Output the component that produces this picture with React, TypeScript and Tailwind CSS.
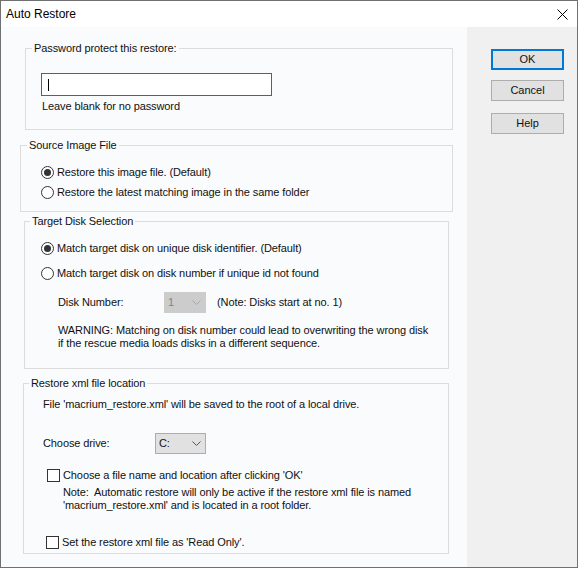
import React from "react";

const font = { fontFamily: '"Liberation Sans", Arial, sans-serif' };

function Radio({ checked }: { checked?: boolean }) {
  return (
    <span className="w-[13px] h-[13px] rounded-full border border-[#333333] bg-white flex items-center justify-center shrink-0">
      {checked && <span className="w-[7px] h-[7px] rounded-full bg-[#333333]" />}
    </span>
  );
}

function Check() {
  return <span className="w-[13px] h-[13px] border border-[#333333] bg-white shrink-0" />;
}

function Chevron({ color }: { color: string }) {
  return (
    <svg width="9" height="5" viewBox="0 0 9 5" className="shrink-0">
      <polyline points="0.5,0.5 4.5,4.5 8.5,0.5" fill="none" stroke={color} strokeWidth="1" />
    </svg>
  );
}

function GroupLabel({ children, left }: { children: React.ReactNode; left: string }) {
  return (
    <span className={`absolute -top-[8px] ${left} px-[2px] bg-[#fafbfd] h-[14px] leading-[14px] whitespace-nowrap`}>
      {children}
    </span>
  );
}

export default function App() {
  return (
    <div className="w-[578px] h-[569px] bg-white text-[11px] leading-[13px] text-[#111111]" style={font}>
      <div className="w-[578px] h-[568px] border border-[#707070] flex flex-col">
        {/* Title bar */}
        <div className="h-[26px] bg-white flex items-center justify-between pl-[5px] pr-[9px] shrink-0">
          <span className="text-[12px] leading-[14px] text-black">Auto Restore</span>
          <svg width="11" height="11" viewBox="0 0 11 11">
            <line x1="0.5" y1="0.5" x2="10.5" y2="10.5" stroke="#000" strokeWidth="1" />
            <line x1="10.5" y1="0.5" x2="0.5" y2="10.5" stroke="#000" strokeWidth="1" />
          </svg>
        </div>

        <div className="flex flex-1 tracking-[-0.1px]">
          {/* Left content */}
          <div className="w-[466px] bg-[#fafbfd] flex flex-col">
            {/* Group 1 */}
            <div className="relative mt-[21px] ml-[24px] w-[428px] h-[82px] border border-[#dcdcdc] pt-[24px] pl-[15px] flex flex-col">
              <GroupLabel left="left-[6px]">Password protect this restore:</GroupLabel>
              <div className="w-[231px] h-[23px] border border-[#0078d7] bg-white flex items-center pl-[6px]">
                <span className="w-[1px] h-[12px] bg-black" />
              </div>
              <span className="mt-[4px] ml-[1px]">Leave blank for no password</span>
            </div>

            {/* Group 2 */}
            <div className="relative mt-[15px] ml-[19px] w-[433px] h-[67px] border border-[#dcdcdc] pt-[16px] pl-[20px] flex flex-col">
              <GroupLabel left="left-[6px]">Source Image File</GroupLabel>
              <div className="h-[20px] flex items-center gap-[3px]">
                <Radio checked />
                <span>Restore this image file. (Default)</span>
              </div>
              <div className="h-[20px] flex items-center gap-[3px]">
                <Radio />
                <span>Restore the latest matching image in the same folder</span>
              </div>
            </div>

            {/* Group 3 */}
            <div className="relative mt-[9px] ml-[23px] w-[425px] h-[148px] border border-[#dcdcdc] pt-[14px] pl-[16px] flex flex-col">
              <GroupLabel left="left-[5px]">Target Disk Selection</GroupLabel>
              <div className="h-[25px] flex items-center gap-[3px]">
                <Radio checked />
                <span>Match target disk on unique disk identifier. (Default)</span>
              </div>
              <div className="h-[25px] flex items-center gap-[3px]">
                <Radio />
                <span>Match target disk on disk number if unique id not found</span>
              </div>
              <div className="mt-[6px] ml-[17px] flex items-center h-[21px]">
                <span className="w-[106px]">Disk Number:</span>
                <div className="w-[42px] h-[21px] bg-[#cccccc] border border-[#cccccc] flex items-center justify-between pl-[3px] pr-[4px] text-[#838383]">
                  <span>1</span>
                  <Chevron color="#a8a8a8" />
                </div>
                <span className="ml-[11px]">(Note: Disks start at no. 1)</span>
              </div>
              <div className="mt-[11px] ml-[17px] flex flex-col">
                <span>WARNING: Matching on disk number could lead to overwriting the wrong disk</span>
                <span>if the rescue media loads disks in a different sequence.</span>
              </div>
            </div>

            {/* Group 4 */}
            <div className="relative mt-[14px] ml-[22px] w-[426px] h-[171px] border border-[#dcdcdc] pt-[14px] pl-[19px] flex flex-col">
              <GroupLabel left="left-[5px]">Restore xml file location</GroupLabel>
              <span>File 'macrium_restore.xml' will be saved to the root of a local drive.</span>
              <div className="mt-[22px] flex items-center h-[21px]">
                <span className="w-[112px]">Choose drive:</span>
                <div className="w-[51px] h-[21px] bg-[#e1e1e1] border border-[#adadad] flex items-center justify-between pl-[3px] pr-[4px]">
                  <span>C:</span>
                  <Chevron color="#555555" />
                </div>
              </div>
              <div className="mt-[15px] ml-[4px] h-[13px] flex items-center gap-[3px]">
                <Check />
                <span>Choose a file name and location after clicking 'OK'</span>
              </div>
              <div className="mt-[4px] ml-[20px] flex flex-col">
                <span>Note:&nbsp; Automatic restore will only be active if the restore xml file is named</span>
                <span>'macrium_restore.xml' and is located in a root folder.</span>
              </div>
              <div className="mt-[24px] ml-[3px] h-[13px] flex items-center gap-[3px]">
                <Check />
                <span>Set the restore xml file as 'Read Only'.</span>
              </div>
            </div>
          </div>

          {/* Right buttons */}
          <div className="flex-1 bg-[#f0f0f0] flex flex-col pl-[24px] tracking-normal">
            <div className="mt-[22px] w-[73px] h-[21px] border-2 border-[#0078d7] bg-[#e1e1e1] flex items-center justify-center">
              OK
            </div>
            <div className="mt-[10px] w-[73px] h-[21px] border border-[#adadad] bg-[#e1e1e1] flex items-center justify-center">
              Cancel
            </div>
            <div className="mt-[12px] w-[73px] h-[21px] border border-[#adadad] bg-[#e1e1e1] flex items-center justify-center">
              Help
            </div>
          </div>
        </div>
      </div>
    </div>
  );
}
